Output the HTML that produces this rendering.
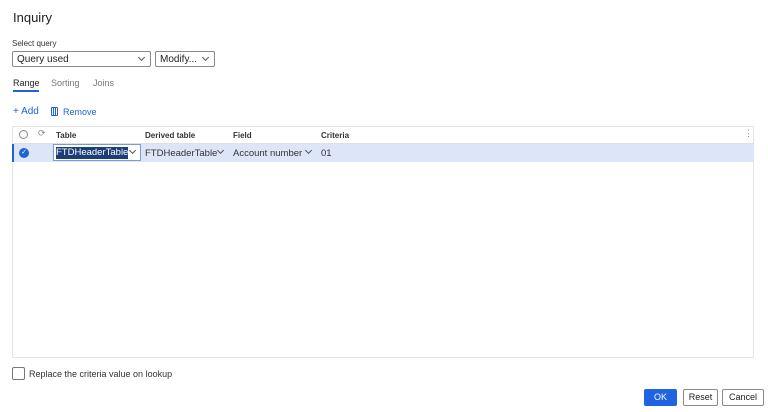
<!DOCTYPE html>
<html><head><style>
*{box-sizing:border-box;margin:0;padding:0}
body{width:768px;height:412px;background:#fff;font-family:"Liberation Sans",sans-serif;color:#222;position:relative;overflow:hidden}
.a{position:absolute}
.dd{border:1px solid #8a8a8a;border-radius:2px;height:16px;font-size:10px;line-height:15px;padding-left:4px}
.chev{position:absolute;width:5px;height:5px;border-right:1px solid #555;border-bottom:1px solid #555;transform:rotate(45deg)}
.hd{font-size:8px;font-weight:bold;color:#333}
.btn{position:absolute;top:389px;height:17px;border:1px solid #8a8a8a;border-radius:2px;font-size:9px;line-height:15px;text-align:center;background:#fff}
.cell{font-size:9px;color:#333}
</style></head><body>
<div class="a" style="left:13px;top:10px;font-size:13px">Inquiry</div>
<div class="a" style="left:12px;top:39px;font-size:8px;color:#333">Select query</div>
<div class="a dd" style="left:12px;top:51px;width:139px">Query used<span class="chev" style="right:6px;top:3px"></span></div>
<div class="a dd" style="left:155px;top:51px;width:60px">Modify...<span class="chev" style="right:6px;top:3px"></span></div>
<div class="a" style="left:13px;top:78px;font-size:9px">Range</div>
<div class="a" style="left:13px;top:90px;width:26px;height:2px;background:#1f63d6"></div>
<div class="a" style="left:51px;top:78px;font-size:9px;color:#777">Sorting</div>
<div class="a" style="left:93px;top:78px;font-size:9px;color:#777">Joins</div>
<div class="a" style="left:13px;top:106px;font-size:10px;color:#1f63d6">+ Add</div>
<div class="a" style="left:51px;top:107px;width:7px;height:9px;border:1px solid #1f63d6;border-radius:1px;background:repeating-linear-gradient(90deg,transparent 0 1px,#1f63d6 1px 2px)"></div>
<div class="a" style="left:63px;top:107px;font-size:9px;color:#1f63d6">Remove</div>
<div class="a" style="left:12px;top:126px;width:742px;height:232px;border:1px solid #e4e4e4"></div>
<div class="a" style="left:12px;top:143px;width:742px;height:1px;background:#e0e0e0"></div>
<div class="a" style="left:19px;top:130px;width:9px;height:9px;border:1px solid #888;border-radius:50%"></div>
<div class="a" style="left:38px;top:128px;font-size:9px;color:#888">⟳</div>
<div class="a hd" style="left:56px;top:131px">Table</div>
<div class="a hd" style="left:145px;top:131px">Derived table</div>
<div class="a hd" style="left:233px;top:131px">Field</div>
<div class="a hd" style="left:321px;top:131px">Criteria</div>
<div class="a" style="left:744px;top:128px;font-size:9px;color:#888">⋮</div>
<div class="a" style="left:12px;top:144px;width:742px;height:18px;background:#dce6f8"></div>
<div class="a" style="left:12px;top:144px;width:2px;height:18px;background:#1f63d6"></div>
<div class="a" style="left:19px;top:148px;width:10px;height:10px;background:#1f63d6;border-radius:50%;color:#fff;font-size:7px;line-height:10px;text-align:center">✓</div>
<div class="a" style="left:53px;top:144px;width:88px;height:17px;border:1px solid #7a9cd6;background:#fff"></div>
<div class="a" style="left:56px;top:147px;height:12px;background:#1c3e78;color:#fff;font-size:9.5px;line-height:12px">FTDHeaderTable</div>
<span class="chev a" style="left:130px;top:148px"></span>
<div class="a cell" style="left:145px;top:148px;font-size:9.5px">FTDHeaderTable</div>
<span class="chev a" style="left:218px;top:148px"></span>
<div class="a cell" style="left:233px;top:148px;font-size:9.5px">Account number</div>
<span class="chev a" style="left:306px;top:148px"></span>
<div class="a cell" style="left:321px;top:148px;font-size:9.5px">01</div>
<div class="a" style="left:12px;top:367px;width:13px;height:13px;border:1px solid #777;border-radius:2px"></div>
<div class="a" style="left:29px;top:369px;font-size:9px;color:#333">Replace the criteria value on lookup</div>
<div class="btn" style="left:644px;width:33px;background:#1f63e0;border-color:#1f63e0;color:#fff">OK</div>
<div class="btn" style="left:683px;width:35px">Reset</div>
<div class="btn" style="left:722px;width:42px">Cancel</div>
</body></html>
